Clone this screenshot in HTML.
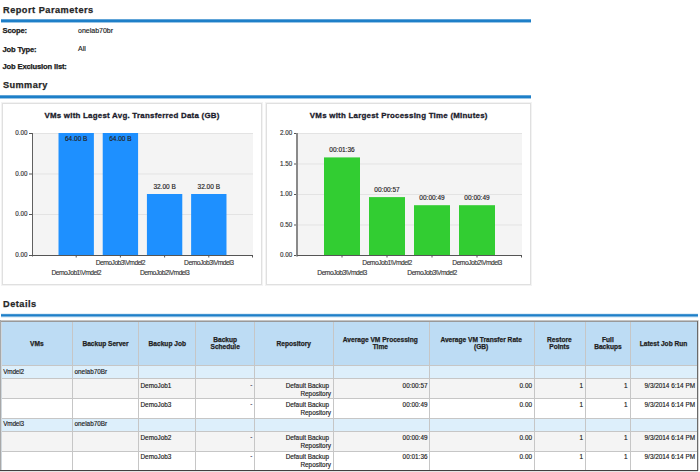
<!DOCTYPE html>
<html><head><meta charset="utf-8"><style>
html,body{margin:0;padding:0;background:#fff;}
body{width:700px;height:472px;position:relative;overflow:hidden;font-family:"Liberation Sans", sans-serif;}
.t{position:absolute;white-space:pre;-webkit-text-stroke:0.15px currentColor;}
.b{-webkit-text-stroke:0.25px currentColor;}
.r{position:absolute;}
</style></head><body>
<div class="t b" style="left:3.00px;top:6.01px;font-size:9.2px;line-height:9.2px;font-weight:bold;color:#262626;letter-spacing:0.5px;">Report Parameters</div><div class="r" style="left:1px;top:19px;width:530px;height:4px;background:linear-gradient(to bottom, rgba(30,127,200,0.7) 0 25%, #1e7fc8 25% 75%, rgba(30,127,200,0.45) 75% 100%);"></div><div class="t b" style="left:2.50px;top:27.17px;font-size:7.6px;line-height:7.6px;font-weight:bold;color:#1a1a1a;letter-spacing:-0.15px;">Scope:</div><div class="t" style="left:78.00px;top:26.97px;font-size:7.0px;line-height:7.0px;font-weight:normal;color:#1a1a1a;letter-spacing:0px;">onelab70br</div><div class="t b" style="left:2.50px;top:45.57px;font-size:7.6px;line-height:7.6px;font-weight:bold;color:#1a1a1a;letter-spacing:-0.15px;">Job Type:</div><div class="t" style="left:78.00px;top:45.37px;font-size:7.0px;line-height:7.0px;font-weight:normal;color:#1a1a1a;letter-spacing:0px;">All</div><div class="t b" style="left:2.50px;top:62.57px;font-size:7.6px;line-height:7.6px;font-weight:bold;color:#1a1a1a;letter-spacing:-0.15px;">Job Exclusion list:</div><div class="t b" style="left:3.00px;top:81.21px;font-size:9.2px;line-height:9.2px;font-weight:bold;color:#262626;letter-spacing:0.4px;">Summary</div><div class="r" style="left:0px;top:95px;width:531px;height:4px;background:linear-gradient(to bottom, rgba(30,127,200,0.7) 0 25%, #1e7fc8 25% 75%, rgba(30,127,200,0.45) 75% 100%);"></div><svg class="r" style="left:0;top:0" width="700" height="300" viewBox="0 0 700 300" font-family='"Liberation Sans", sans-serif'><rect x="1.5" y="102.5" width="261" height="183" fill="#fff" stroke="#f3f3f3" stroke-width="1"/><rect x="2.5" y="103.5" width="259" height="181" fill="#fff" stroke="#e0e0e0" stroke-width="1"/><text x="132" y="118.2" text-anchor="middle" font-size="7.9" letter-spacing="0.25" font-weight="bold" fill="#1b1b2b" stroke="#1b1b2b" stroke-width="0.3">VMs with Lagest Avg. Transferred Data (GB)</text><rect x="32" y="133" width="221" height="122" fill="#f4f4f4"/><line x1="32" y1="133.5" x2="253" y2="133.5" stroke="#e3e3e3" stroke-width="1"/><line x1="29" y1="133.5" x2="32" y2="133.5" stroke="#555" stroke-width="1"/><text x="27.5" y="135.2" text-anchor="end" font-size="6.3" fill="#333" stroke="#333" stroke-width="0.15">0.00</text><line x1="32" y1="174.0" x2="253" y2="174.0" stroke="#e3e3e3" stroke-width="1"/><line x1="29" y1="174.0" x2="32" y2="174.0" stroke="#555" stroke-width="1"/><text x="27.5" y="175.7" text-anchor="end" font-size="6.3" fill="#333" stroke="#333" stroke-width="0.15">0.00</text><line x1="32" y1="214.5" x2="253" y2="214.5" stroke="#e3e3e3" stroke-width="1"/><line x1="29" y1="214.5" x2="32" y2="214.5" stroke="#555" stroke-width="1"/><text x="27.5" y="216.2" text-anchor="end" font-size="6.3" fill="#333" stroke="#333" stroke-width="0.15">0.00</text><line x1="29" y1="255.5" x2="32" y2="255.5" stroke="#555" stroke-width="1"/><text x="27.5" y="257.2" text-anchor="end" font-size="6.3" fill="#333" stroke="#333" stroke-width="0.15">0.00</text><rect x="58.52" y="133" width="35.36" height="122" fill="#1e90ff"/><text x="76.20" y="141" text-anchor="middle" font-size="6.5" fill="#222" stroke="#222" stroke-width="0.15">64.00 B</text><line x1="76.20" y1="255" x2="76.20" y2="257.5" stroke="#555" stroke-width="1"/><text x="76.20" y="274.6" text-anchor="middle" font-size="6.7" letter-spacing="-0.5" fill="#3a3a3a" stroke="#3a3a3a" stroke-width="0.15">DemoJob1\Vmdel2</text><rect x="102.72" y="133" width="35.36" height="122" fill="#1e90ff"/><text x="120.40" y="141" text-anchor="middle" font-size="6.5" fill="#222" stroke="#222" stroke-width="0.15">64.00 B</text><line x1="120.40" y1="255" x2="120.40" y2="257.5" stroke="#555" stroke-width="1"/><text x="120.40" y="264.6" text-anchor="middle" font-size="6.7" letter-spacing="-0.5" fill="#3a3a3a" stroke="#3a3a3a" stroke-width="0.15">DemoJob3\Vmdel2</text><rect x="146.92" y="194" width="35.36" height="61" fill="#1e90ff"/><text x="164.60" y="189" text-anchor="middle" font-size="6.5" fill="#222" stroke="#222" stroke-width="0.15">32.00 B</text><line x1="164.60" y1="255" x2="164.60" y2="257.5" stroke="#555" stroke-width="1"/><text x="164.60" y="274.6" text-anchor="middle" font-size="6.7" letter-spacing="-0.5" fill="#3a3a3a" stroke="#3a3a3a" stroke-width="0.15">DemoJob2\Vmdel3</text><rect x="191.12" y="194" width="35.36" height="61" fill="#1e90ff"/><text x="208.80" y="189" text-anchor="middle" font-size="6.5" fill="#222" stroke="#222" stroke-width="0.15">32.00 B</text><line x1="208.80" y1="255" x2="208.80" y2="257.5" stroke="#555" stroke-width="1"/><text x="208.80" y="264.6" text-anchor="middle" font-size="6.7" letter-spacing="-0.5" fill="#3a3a3a" stroke="#3a3a3a" stroke-width="0.15">DemoJob3\Vmdel3</text><line x1="32.5" y1="133" x2="32.5" y2="256.5" stroke="#606060" stroke-width="1"/><line x1="32" y1="255.5" x2="253" y2="255.5" stroke="#555" stroke-width="1"/><line x1="252.5" y1="255" x2="252.5" y2="257.5" stroke="#555" stroke-width="1"/><rect x="265.5" y="102.5" width="266" height="183" fill="#fff" stroke="#f3f3f3" stroke-width="1"/><rect x="266.5" y="103.5" width="264" height="181" fill="#fff" stroke="#e0e0e0" stroke-width="1"/><text x="398.8" y="118.2" text-anchor="middle" font-size="7.9" letter-spacing="0.25" font-weight="bold" fill="#1b1b2b" stroke="#1b1b2b" stroke-width="0.3">VMs with Largest Processing Time (Minutes)</text><rect x="297" y="133" width="225" height="122" fill="#f4f4f4"/><line x1="297" y1="133.5" x2="522" y2="133.5" stroke="#e3e3e3" stroke-width="1"/><line x1="294" y1="133.5" x2="297" y2="133.5" stroke="#555" stroke-width="1"/><text x="292.3" y="135.2" text-anchor="end" font-size="6.3" fill="#333" stroke="#333" stroke-width="0.15">2.00</text><line x1="297" y1="164.0" x2="522" y2="164.0" stroke="#e3e3e3" stroke-width="1"/><line x1="294" y1="164.0" x2="297" y2="164.0" stroke="#555" stroke-width="1"/><text x="292.3" y="165.7" text-anchor="end" font-size="6.3" fill="#333" stroke="#333" stroke-width="0.15">1.50</text><line x1="297" y1="194.5" x2="522" y2="194.5" stroke="#e3e3e3" stroke-width="1"/><line x1="294" y1="194.5" x2="297" y2="194.5" stroke="#555" stroke-width="1"/><text x="292.3" y="196.2" text-anchor="end" font-size="6.3" fill="#333" stroke="#333" stroke-width="0.15">1.00</text><line x1="297" y1="225.0" x2="522" y2="225.0" stroke="#e3e3e3" stroke-width="1"/><line x1="294" y1="225.0" x2="297" y2="225.0" stroke="#555" stroke-width="1"/><text x="292.3" y="226.7" text-anchor="end" font-size="6.3" fill="#333" stroke="#333" stroke-width="0.15">0.50</text><line x1="294" y1="255.5" x2="297" y2="255.5" stroke="#555" stroke-width="1"/><text x="292.3" y="257.2" text-anchor="end" font-size="6.3" fill="#333" stroke="#333" stroke-width="0.15">0.00</text><rect x="324.00" y="157.4" width="36.00" height="97.6" fill="#32cd32"/><text x="342.00" y="152.4" text-anchor="middle" font-size="6.5" fill="#222" stroke="#222" stroke-width="0.15">00:01:36</text><line x1="342.00" y1="255" x2="342.00" y2="257.5" stroke="#555" stroke-width="1"/><text x="342.00" y="274.6" text-anchor="middle" font-size="6.7" letter-spacing="-0.5" fill="#3a3a3a" stroke="#3a3a3a" stroke-width="0.15">DemoJob3\Vmdel3</text><rect x="369.00" y="197.1" width="36.00" height="57.900000000000006" fill="#32cd32"/><text x="387.00" y="192.1" text-anchor="middle" font-size="6.5" fill="#222" stroke="#222" stroke-width="0.15">00:00:57</text><line x1="387.00" y1="255" x2="387.00" y2="257.5" stroke="#555" stroke-width="1"/><text x="387.00" y="264.6" text-anchor="middle" font-size="6.7" letter-spacing="-0.5" fill="#3a3a3a" stroke="#3a3a3a" stroke-width="0.15">DemoJob1\Vmdel2</text><rect x="414.00" y="205.2" width="36.00" height="49.80000000000001" fill="#32cd32"/><text x="432.00" y="200.2" text-anchor="middle" font-size="6.5" fill="#222" stroke="#222" stroke-width="0.15">00:00:49</text><line x1="432.00" y1="255" x2="432.00" y2="257.5" stroke="#555" stroke-width="1"/><text x="432.00" y="274.6" text-anchor="middle" font-size="6.7" letter-spacing="-0.5" fill="#3a3a3a" stroke="#3a3a3a" stroke-width="0.15">DemoJob3\Vmdel2</text><rect x="459.00" y="205.2" width="36.00" height="49.80000000000001" fill="#32cd32"/><text x="477.00" y="200.2" text-anchor="middle" font-size="6.5" fill="#222" stroke="#222" stroke-width="0.15">00:00:49</text><line x1="477.00" y1="255" x2="477.00" y2="257.5" stroke="#555" stroke-width="1"/><text x="477.00" y="264.6" text-anchor="middle" font-size="6.7" letter-spacing="-0.5" fill="#3a3a3a" stroke="#3a3a3a" stroke-width="0.15">DemoJob2\Vmdel3</text><line x1="297" y1="133" x2="297" y2="256.5" stroke="#8a8a8a" stroke-width="2"/><line x1="297" y1="255.5" x2="522" y2="255.5" stroke="#555" stroke-width="1"/><line x1="521.5" y1="255" x2="521.5" y2="257.5" stroke="#555" stroke-width="1"/></svg><div class="t b" style="left:3.00px;top:299.81px;font-size:9.2px;line-height:9.2px;font-weight:bold;color:#262626;letter-spacing:0.5px;">Details</div><div class="r" style="left:1px;top:313px;width:697px;height:5px;background:linear-gradient(to bottom, rgba(30,127,200,0.12) 0 20%, rgba(30,127,200,0.85) 20% 40%, #1e7fc8 40% 60%, rgba(30,127,200,0.6) 60% 80%, rgba(30,127,200,0.12) 80% 100%);"></div><div class="r" style="left:0px;top:322px;width:698px;height:43px;background:#bddcf4;"></div><div class="r" style="left:0px;top:366px;width:698px;height:12px;background:#ddeffb;"></div><div class="r" style="left:0px;top:379px;width:698px;height:19px;background:#f4f4f4;"></div><div class="r" style="left:0px;top:399px;width:698px;height:19px;background:#ffffff;"></div><div class="r" style="left:0px;top:419px;width:698px;height:12px;background:#ddeffb;"></div><div class="r" style="left:0px;top:432px;width:698px;height:19px;background:#f4f4f4;"></div><div class="r" style="left:0px;top:452px;width:698px;height:18px;background:#ffffff;"></div><div class="r" style="left:0px;top:365px;width:698px;height:1px;background:#c6c6c6;"></div><div class="r" style="left:0px;top:378px;width:698px;height:1px;background:#c6c6c6;"></div><div class="r" style="left:0px;top:398px;width:698px;height:1px;background:#c6c6c6;"></div><div class="r" style="left:0px;top:418px;width:698px;height:1px;background:#c6c6c6;"></div><div class="r" style="left:0px;top:431px;width:698px;height:1px;background:#c6c6c6;"></div><div class="r" style="left:0px;top:451px;width:698px;height:1px;background:#c6c6c6;"></div><div class="r" style="left:72px;top:322px;width:1px;height:148px;background:#c6c6c6;"></div><div class="r" style="left:138px;top:322px;width:1px;height:148px;background:#c6c6c6;"></div><div class="r" style="left:195px;top:322px;width:1px;height:148px;background:#c6c6c6;"></div><div class="r" style="left:254px;top:322px;width:1px;height:148px;background:#c6c6c6;"></div><div class="r" style="left:333px;top:322px;width:1px;height:148px;background:#c6c6c6;"></div><div class="r" style="left:429px;top:322px;width:1px;height:148px;background:#c6c6c6;"></div><div class="r" style="left:534px;top:322px;width:1px;height:148px;background:#c6c6c6;"></div><div class="r" style="left:585px;top:322px;width:1px;height:148px;background:#c6c6c6;"></div><div class="r" style="left:630px;top:322px;width:1px;height:148px;background:#c6c6c6;"></div><div class="r" style="left:0px;top:320px;width:698px;height:1px;background:#c4c4c4;"></div><div class="r" style="left:0px;top:321px;width:698px;height:1px;background:#999999;"></div><div class="r" style="left:0px;top:320px;width:1px;height:151px;background:#a8a8a8;"></div><div class="r" style="left:1px;top:322px;width:1px;height:148px;background:#d0d8de;"></div><div class="r" style="left:697px;top:321px;width:1px;height:150px;background:#6a6a6a;"></div><div class="r" style="left:698px;top:320px;width:1px;height:151px;background:#d8d8d8;"></div><div class="r" style="left:0px;top:470px;width:698px;height:1px;background:#404040;"></div><div class="r" style="left:0px;top:471px;width:698px;height:1px;background:#e4e4e4;"></div><div class="t b" style="left:-113.20px;width:300px;text-align:center;top:340.81px;font-size:6.6px;line-height:6.6px;font-weight:bold;color:#1f1f1f;letter-spacing:0px;">VMs</div><div class="t b" style="left:-44.50px;width:300px;text-align:center;top:340.81px;font-size:6.6px;line-height:6.6px;font-weight:bold;color:#1f1f1f;letter-spacing:0px;">Backup Server</div><div class="t b" style="left:17.30px;width:300px;text-align:center;top:340.81px;font-size:6.6px;line-height:6.6px;font-weight:bold;color:#1f1f1f;letter-spacing:0px;">Backup Job</div><div class="t b" style="left:75.20px;width:300px;text-align:center;top:337.01px;font-size:6.6px;line-height:6.6px;font-weight:bold;color:#1f1f1f;letter-spacing:0px;">Backup</div><div class="t b" style="left:75.20px;width:300px;text-align:center;top:344.41px;font-size:6.6px;line-height:6.6px;font-weight:bold;color:#1f1f1f;letter-spacing:0px;">Schedule</div><div class="t b" style="left:143.80px;width:300px;text-align:center;top:340.81px;font-size:6.6px;line-height:6.6px;font-weight:bold;color:#1f1f1f;letter-spacing:0px;">Repository</div><div class="t b" style="left:230.30px;width:300px;text-align:center;top:337.01px;font-size:6.6px;line-height:6.6px;font-weight:bold;color:#1f1f1f;letter-spacing:0px;">Average VM Processing</div><div class="t b" style="left:230.30px;width:300px;text-align:center;top:344.41px;font-size:6.6px;line-height:6.6px;font-weight:bold;color:#1f1f1f;letter-spacing:0px;">Time</div><div class="t b" style="left:331.20px;width:300px;text-align:center;top:337.01px;font-size:6.6px;line-height:6.6px;font-weight:bold;color:#1f1f1f;letter-spacing:0px;">Average VM Transfer Rate</div><div class="t b" style="left:331.20px;width:300px;text-align:center;top:344.41px;font-size:6.6px;line-height:6.6px;font-weight:bold;color:#1f1f1f;letter-spacing:0px;">(GB)</div><div class="t b" style="left:409.40px;width:300px;text-align:center;top:337.01px;font-size:6.6px;line-height:6.6px;font-weight:bold;color:#1f1f1f;letter-spacing:0px;">Restore</div><div class="t b" style="left:409.40px;width:300px;text-align:center;top:344.41px;font-size:6.6px;line-height:6.6px;font-weight:bold;color:#1f1f1f;letter-spacing:0px;">Points</div><div class="t b" style="left:457.90px;width:300px;text-align:center;top:337.01px;font-size:6.6px;line-height:6.6px;font-weight:bold;color:#1f1f1f;letter-spacing:0px;">Full</div><div class="t b" style="left:457.90px;width:300px;text-align:center;top:344.41px;font-size:6.6px;line-height:6.6px;font-weight:bold;color:#1f1f1f;letter-spacing:0px;">Backups</div><div class="t b" style="left:513.50px;width:300px;text-align:center;top:340.81px;font-size:6.6px;line-height:6.6px;font-weight:bold;color:#1f1f1f;letter-spacing:0px;">Latest Job Run</div><div class="t" style="left:3.30px;top:368.88px;font-size:6.4px;line-height:6.4px;font-weight:normal;color:#1a1a1a;letter-spacing:-0.2px;">Vmdel2</div><div class="t" style="left:74.50px;top:368.88px;font-size:6.4px;line-height:6.4px;font-weight:normal;color:#1a1a1a;letter-spacing:0px;">onelab70Br</div><div class="t" style="left:140.50px;top:383.28px;font-size:6.4px;line-height:6.4px;font-weight:normal;color:#1a1a1a;letter-spacing:0px;">DemoJob1</div><div class="t" style="right:447.70px;top:382.28px;font-size:6.4px;line-height:6.4px;font-weight:normal;color:#1a1a1a;letter-spacing:0px;">-</div><div class="t" style="right:371.00px;top:383.28px;font-size:6.4px;line-height:6.4px;font-weight:normal;color:#1a1a1a;letter-spacing:0px;">Default Backup</div><div class="t" style="right:369.00px;top:390.88px;font-size:6.4px;line-height:6.4px;font-weight:normal;color:#1a1a1a;letter-spacing:0px;">Repository</div><div class="t" style="right:272.50px;top:383.28px;font-size:6.4px;line-height:6.4px;font-weight:normal;color:#1a1a1a;letter-spacing:0px;">00:00:57</div><div class="t" style="right:168.00px;top:383.28px;font-size:6.4px;line-height:6.4px;font-weight:normal;color:#1a1a1a;letter-spacing:0px;">0.00</div><div class="t" style="right:117.00px;top:383.28px;font-size:6.4px;line-height:6.4px;font-weight:normal;color:#1a1a1a;letter-spacing:0px;">1</div><div class="t" style="right:72.50px;top:383.28px;font-size:6.4px;line-height:6.4px;font-weight:normal;color:#1a1a1a;letter-spacing:0px;">1</div><div class="t" style="right:5.00px;top:383.28px;font-size:6.4px;line-height:6.4px;font-weight:normal;color:#1a1a1a;letter-spacing:0px;">9/3/2014 6:14 PM</div><div class="t" style="left:140.50px;top:402.28px;font-size:6.4px;line-height:6.4px;font-weight:normal;color:#1a1a1a;letter-spacing:0px;">DemoJob3</div><div class="t" style="right:447.70px;top:401.28px;font-size:6.4px;line-height:6.4px;font-weight:normal;color:#1a1a1a;letter-spacing:0px;">-</div><div class="t" style="right:371.00px;top:402.28px;font-size:6.4px;line-height:6.4px;font-weight:normal;color:#1a1a1a;letter-spacing:0px;">Default Backup</div><div class="t" style="right:369.00px;top:409.88px;font-size:6.4px;line-height:6.4px;font-weight:normal;color:#1a1a1a;letter-spacing:0px;">Repository</div><div class="t" style="right:272.50px;top:402.28px;font-size:6.4px;line-height:6.4px;font-weight:normal;color:#1a1a1a;letter-spacing:0px;">00:00:49</div><div class="t" style="right:168.00px;top:402.28px;font-size:6.4px;line-height:6.4px;font-weight:normal;color:#1a1a1a;letter-spacing:0px;">0.00</div><div class="t" style="right:117.00px;top:402.28px;font-size:6.4px;line-height:6.4px;font-weight:normal;color:#1a1a1a;letter-spacing:0px;">1</div><div class="t" style="right:72.50px;top:402.28px;font-size:6.4px;line-height:6.4px;font-weight:normal;color:#1a1a1a;letter-spacing:0px;">1</div><div class="t" style="right:5.00px;top:402.28px;font-size:6.4px;line-height:6.4px;font-weight:normal;color:#1a1a1a;letter-spacing:0px;">9/3/2014 6:14 PM</div><div class="t" style="left:3.30px;top:420.88px;font-size:6.4px;line-height:6.4px;font-weight:normal;color:#1a1a1a;letter-spacing:-0.2px;">Vmdel3</div><div class="t" style="left:74.50px;top:420.88px;font-size:6.4px;line-height:6.4px;font-weight:normal;color:#1a1a1a;letter-spacing:0px;">onelab70Br</div><div class="t" style="left:140.50px;top:435.28px;font-size:6.4px;line-height:6.4px;font-weight:normal;color:#1a1a1a;letter-spacing:0px;">DemoJob2</div><div class="t" style="right:447.70px;top:434.28px;font-size:6.4px;line-height:6.4px;font-weight:normal;color:#1a1a1a;letter-spacing:0px;">-</div><div class="t" style="right:371.00px;top:435.28px;font-size:6.4px;line-height:6.4px;font-weight:normal;color:#1a1a1a;letter-spacing:0px;">Default Backup</div><div class="t" style="right:369.00px;top:442.88px;font-size:6.4px;line-height:6.4px;font-weight:normal;color:#1a1a1a;letter-spacing:0px;">Repository</div><div class="t" style="right:272.50px;top:435.28px;font-size:6.4px;line-height:6.4px;font-weight:normal;color:#1a1a1a;letter-spacing:0px;">00:00:49</div><div class="t" style="right:168.00px;top:435.28px;font-size:6.4px;line-height:6.4px;font-weight:normal;color:#1a1a1a;letter-spacing:0px;">0.00</div><div class="t" style="right:117.00px;top:435.28px;font-size:6.4px;line-height:6.4px;font-weight:normal;color:#1a1a1a;letter-spacing:0px;">1</div><div class="t" style="right:72.50px;top:435.28px;font-size:6.4px;line-height:6.4px;font-weight:normal;color:#1a1a1a;letter-spacing:0px;">1</div><div class="t" style="right:5.00px;top:435.28px;font-size:6.4px;line-height:6.4px;font-weight:normal;color:#1a1a1a;letter-spacing:0px;">9/3/2014 6:14 PM</div><div class="t" style="left:140.50px;top:454.28px;font-size:6.4px;line-height:6.4px;font-weight:normal;color:#1a1a1a;letter-spacing:0px;">DemoJob3</div><div class="t" style="right:447.70px;top:453.28px;font-size:6.4px;line-height:6.4px;font-weight:normal;color:#1a1a1a;letter-spacing:0px;">-</div><div class="t" style="right:371.00px;top:454.28px;font-size:6.4px;line-height:6.4px;font-weight:normal;color:#1a1a1a;letter-spacing:0px;">Default Backup</div><div class="t" style="right:369.00px;top:461.88px;font-size:6.4px;line-height:6.4px;font-weight:normal;color:#1a1a1a;letter-spacing:0px;">Repository</div><div class="t" style="right:272.50px;top:454.28px;font-size:6.4px;line-height:6.4px;font-weight:normal;color:#1a1a1a;letter-spacing:0px;">00:01:36</div><div class="t" style="right:168.00px;top:454.28px;font-size:6.4px;line-height:6.4px;font-weight:normal;color:#1a1a1a;letter-spacing:0px;">0.00</div><div class="t" style="right:117.00px;top:454.28px;font-size:6.4px;line-height:6.4px;font-weight:normal;color:#1a1a1a;letter-spacing:0px;">1</div><div class="t" style="right:72.50px;top:454.28px;font-size:6.4px;line-height:6.4px;font-weight:normal;color:#1a1a1a;letter-spacing:0px;">1</div><div class="t" style="right:5.00px;top:454.28px;font-size:6.4px;line-height:6.4px;font-weight:normal;color:#1a1a1a;letter-spacing:0px;">9/3/2014 6:14 PM</div>
</body></html>
